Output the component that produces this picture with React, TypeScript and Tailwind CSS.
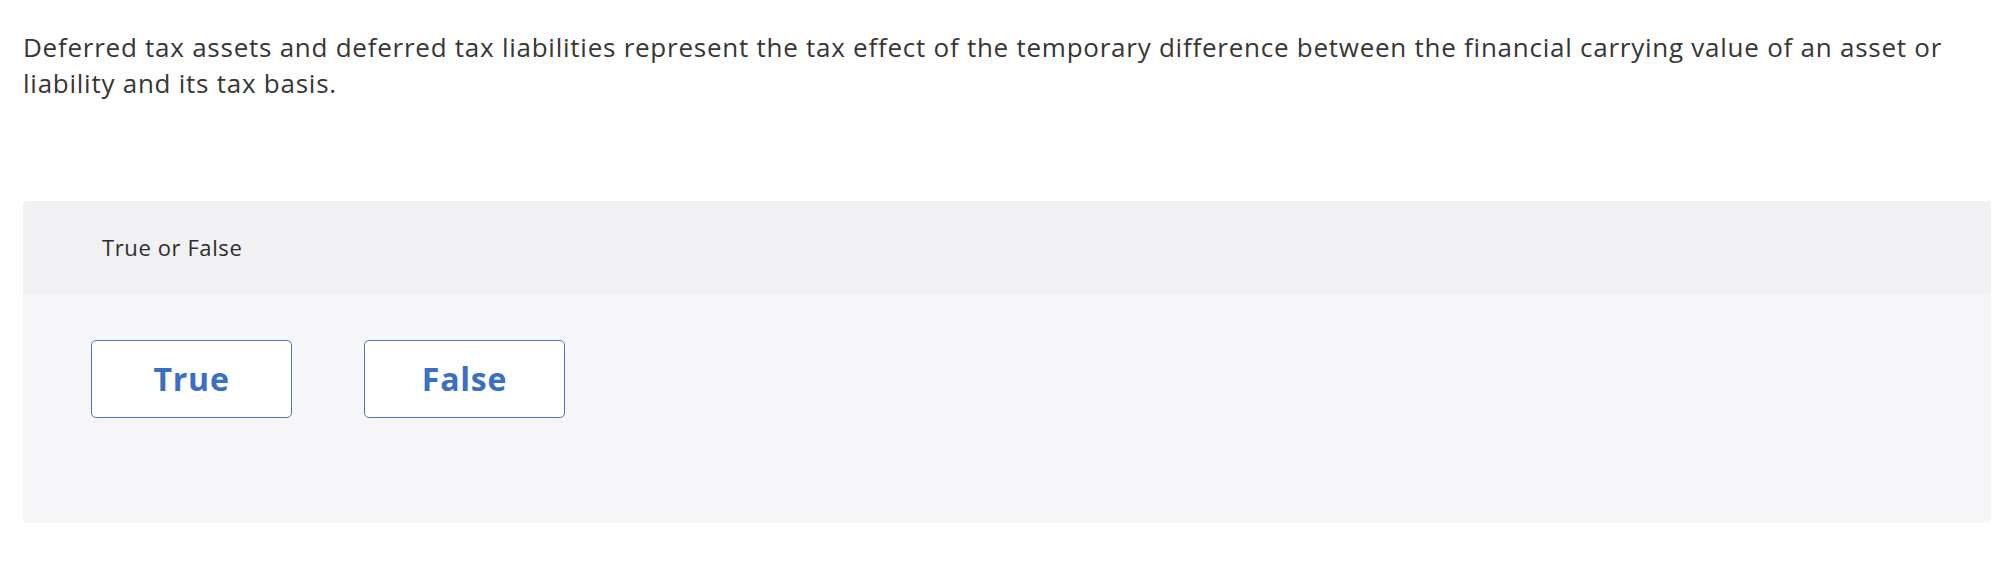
export default function App() {
  return (
    <div className="min-h-[562px] bg-white pl-[23px] pr-[15px] pt-[29px] font-['Open_Sans','Lato',sans-serif]">
      <p className="pr-[40px] text-[26px] leading-[36px] tracking-[0.75px] text-[#363636]">
        Deferred tax assets and deferred tax liabilities represent the tax effect of the temporary
        difference between the financial carrying value of an asset or liability and its tax basis.
      </p>

      <div className="mt-[100px] overflow-hidden rounded-[4px]">
        <div className="flex h-[93px] items-center bg-[#f1f0f3] pl-[79px]">
          <span className="text-[22px] tracking-[0.6px] text-[#2d2d2d]">True or False</span>
        </div>
        <div className="flex h-[229px] gap-[72px] bg-[#f6f5f8] pl-[68px] pt-[46px]">
          {["True", "False"].map((label) => (
            <button
              key={label}
              className="flex h-[78px] w-[201px] items-center justify-center rounded-[5px] border-[1.5px] border-[#4f77b3] bg-white text-[32px] font-bold tracking-[0.8px] text-[#3a6fc2]"
            >
              {label}
            </button>
          ))}
        </div>
      </div>
    </div>
  );
}
